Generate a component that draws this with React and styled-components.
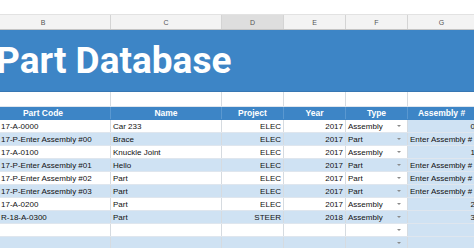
import styled, { createGlobalStyle } from "styled-components";

const GlobalStyle = createGlobalStyle`
  html, body {
    margin: 0;
    padding: 0;
    background: #ffffff;
    overflow: hidden;
  }
  body {
    font-family: "Liberation Sans", Arial, sans-serif;
  }
`;

const COLS = "111px 111px 62px 62px 62px 68px";

const Sheet = styled.div`
  width: 474px;
  height: 248px;
  overflow: hidden;
  padding-top: 14px;
  box-sizing: border-box;
`;

const Letters = styled.div`
  display: grid;
  grid-template-columns: ${COLS};
  height: 16px;
  background: #f3f3f3;
  border-top: 1px solid #e2e2e2;
  border-bottom: 1px solid #c4c4c4;
  box-sizing: border-box;
`;

const Letter = styled.div`
  display: flex;
  align-items: center;
  justify-content: center;
  padding-right: ${(p) => p.$pr || 0}px;
  font-size: 7px;
  color: #555;
  border-right: 1px solid #d4d4d4;
  background: ${(p) => (p.$active ? "#dedede" : "transparent")};
`;

const TitleBand = styled.div`
  height: 62px;
  background: #3d85c6;
  display: flex;
  align-items: center;
  border-bottom: 1px solid #3777b3;
  box-sizing: border-box;
`;

const Title = styled.h1`
  margin: 0 0 0 -4px;
  font-family: Roboto, "Liberation Sans", sans-serif;
  font-weight: 700;
  font-size: 37px;
  color: #ffffff;
  letter-spacing: 0;
  line-height: 1;
`;

const Row = styled.div`
  display: grid;
  grid-template-columns: ${COLS};
  height: ${(p) => p.$h || 13}px;
  box-sizing: border-box;
  border-bottom: 1px solid ${(p) => (p.$head ? "#3d85c6" : "#dfe6ee")};
  background: ${(p) => (p.$head ? "#3d85c6" : p.$shade ? "#cfe2f3" : "#ffffff")};
`;

const Cell = styled.div`
  display: flex;
  align-items: center;
  justify-content: ${(p) =>
    p.$align === "right" ? "flex-end" : p.$align === "center" ? "center" : "flex-start"};
  padding: 0 ${(p) => p.$pr ?? 2}px 0 ${(p) => p.$pl ?? 2}px;
  font-size: 8px;
  color: #111;
  white-space: nowrap;
  overflow: hidden;
  border-right: 1px solid ${(p) => (p.$head ? "#5a98d0" : "#d6dbe0")};
  background: ${(p) => (p.$tint ? "#cfe2f3" : "transparent")};
`;

const HeadCell = styled(Cell)`
  color: #ffffff;
  font-weight: 700;
  font-size: 8.5px;
  justify-content: center;
`;

const TypeCell = styled(Cell)`
  justify-content: space-between;
  padding-right: 6px;
`;

const Caret = styled.span`
  width: 0;
  height: 0;
  border-left: 2.5px solid transparent;
  border-right: 2.5px solid transparent;
  border-top: 2.5px solid #8a8a8a;
`;

const rows = [
  { code: "17-A-0000", name: "Car 233", proj: "ELEC", year: "2017", type: "Assembly", asm: "0" },
  { code: "17-P-Enter Assembly #00", name: "Brace", proj: "ELEC", year: "2017", type: "Part", asm: "Enter Assembly #" },
  { code: "17-A-0100", name: "Knuckle Joint", proj: "ELEC", year: "2017", type: "Assembly", asm: "1" },
  { code: "17-P-Enter Assembly #01", name: "Hello", proj: "ELEC", year: "2017", type: "Part", asm: "Enter Assembly #" },
  { code: "17-P-Enter Assembly #02", name: "Part", proj: "ELEC", year: "2017", type: "Part", asm: "Enter Assembly #" },
  { code: "17-P-Enter Assembly #03", name: "Part", proj: "ELEC", year: "2017", type: "Part", asm: "Enter Assembly #" },
  { code: "17-A-0200", name: "Part", proj: "ELEC", year: "2017", type: "Assembly", asm: "2" },
  { code: "R-18-A-0300", name: "Part", proj: "STEER", year: "2018", type: "Assembly", asm: "3" },
  { code: "", name: "", proj: "", year: "", type: "", asm: "" },
  { code: "", name: "", proj: "", year: "", type: "", asm: "" },
];

const letters = ["B", "C", "D", "E", "F", "G"];

export default function App() {
  return (
    <>
      <GlobalStyle />
      <Sheet>
        <Letters>
          {letters.map((l) => (
            <Letter key={l} $active={l === "D"} $pr={l === "B" ? 24 : 0}>
              {l}
            </Letter>
          ))}
        </Letters>
        <TitleBand>
          <Title>Part Database</Title>
        </TitleBand>
        <Row $h={15}>
          <Cell />
          <Cell />
          <Cell />
          <Cell />
          <Cell />
          <Cell />
        </Row>
        <Row $head>
          <HeadCell $head $pr={26}>Part Code</HeadCell>
          <HeadCell $head>Name</HeadCell>
          <HeadCell $head>Project</HeadCell>
          <HeadCell $head>Year</HeadCell>
          <HeadCell $head>Type</HeadCell>
          <HeadCell $head>Assembly #</HeadCell>
        </Row>
        {rows.map((r, i) => {
          const isNum = /^\d$/.test(r.asm);
          return (
            <Row key={i} $shade={i % 2 === 1}>
              <Cell $pl={1}>{r.code}</Cell>
              <Cell>{r.name}</Cell>
              <Cell $align="right">{r.proj}</Cell>
              <Cell $align="right">{r.year}</Cell>
              <TypeCell>
                <span>{r.type}</span>
                <Caret />
              </TypeCell>
              <Cell $tint $align={isNum ? "right" : "left"} $pr={0}>
                {r.asm}
              </Cell>
            </Row>
          );
        })}
      </Sheet>
    </>
  );
}
